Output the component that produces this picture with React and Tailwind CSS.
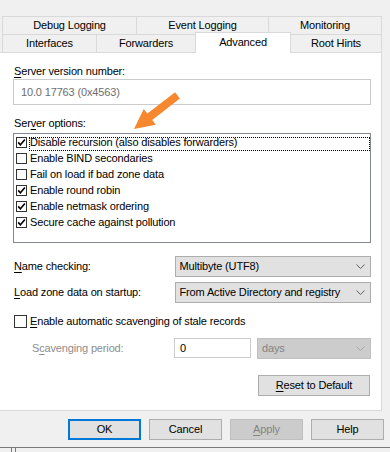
import React from "react";

const Check = ({ checked, size = 11 }) => (
  <span
    className="inline-flex items-center justify-center bg-white border border-[#333333] shrink-0"
    style={{ width: size, height: size }}
  >
    {checked && (
      <svg width={size - 2} height={size - 2} viewBox="0 0 9 9">
        <path d="M1.2 4.4 L3.4 6.8 L7.9 1.6" fill="none" stroke="#000" strokeWidth="1.6" />
      </svg>
    )}
  </span>
);

const Chevron = ({ color = "#606060" }) => (
  <svg width="9" height="5" viewBox="0 0 9 5" className="shrink-0">
    <path d="M0.5 0.5 L4.5 4.5 L8.5 0.5" fill="none" stroke={color} strokeWidth="1" />
  </svg>
);

const Select = ({ text, disabled, w }) => (
  <div
    className={
      "h-[21px] flex items-center justify-between pl-[4px] pr-[5px] border " +
      (disabled ? "bg-[#cccccc] border-[#bfbfbf] text-[#838383]" : "bg-[#e1e1e1] border-[#adadad] text-black")
    }
    style={{ width: w }}
  >
    <span className="leading-[19px]">{text}</span>
    <Chevron color={disabled ? "#a8a8a8" : "#606060"} />
  </div>
);

const items = [
  ["Disable recursion (also disables forwarders)", true],
  ["Enable BIND secondaries", false],
  ["Fail on load if bad zone data", false],
  ["Enable round robin", true],
  ["Enable netmask ordering", true],
  ["Secure cache against pollution", true],
];

export default function App() {
  return (
    <div className="relative w-[390px] h-[452px] overflow-hidden bg-[#f0f0f0] text-black text-[11px] tracking-[-0.15px] font-['Liberation_Sans',Arial,sans-serif]">
      {/* Tabs */}
      <div className="pt-[16px]">
        <div className="flex ml-[2px] h-[18px]">
          <div className="w-[135px] border-l border-t border-r border-[#d9d9d9] flex items-center justify-center leading-[17px]">Debug Logging</div>
          <div className="w-[132px] border-t border-r border-[#d9d9d9] flex items-center justify-center leading-[17px]">Event Logging</div>
          <div className="w-[113px] border-t border-r border-[#d9d9d9] flex items-center justify-center leading-[17px]">Monitoring</div>
        </div>
        <div className="flex ml-[2px] h-[18px]">
          <div className="w-[95px] h-[18px] border-l border-t border-r border-[#d9d9d9] flex items-center justify-center leading-[17px]">Interfaces</div>
          <div className="w-[98px] h-[18px] border-t border-[#d9d9d9] flex items-center justify-center leading-[17px]">Forwarders</div>
          <div className="relative z-10 w-[96px] h-[21px] -mt-[2px] bg-white border-l border-t border-r border-[#d9d9d9] flex items-center justify-center leading-[17px] pb-[2px]">Advanced</div>
          <div className="w-[91px] h-[18px] border-t border-r border-[#d9d9d9] flex items-center justify-center leading-[17px]">Root Hints</div>
        </div>
      </div>

      {/* Panel */}
      <div className="w-[382px] h-[359px] bg-white border-t border-r border-b border-[#d9d9d9] pl-[13px] pt-[12px]">
        <div className="w-[358px]">
          <div className="ml-[1px] h-[13px] leading-[13px]">
            <u className="underline-offset-[2px]">S</u>erver version number:
          </div>
          <div className="mt-[1px] h-[26px] border border-[#cccccc] pl-[7px] flex items-center text-[#6d6d6d]">
            10.0 17763 (0x4563)
          </div>

          <div className="mt-[12px] ml-[1px] h-[13px] leading-[13px]">
            Ser<u className="underline-offset-[2px]">v</u>er options:
          </div>
          <div className="mt-[3px] h-[110px] border border-[#828790] bg-white">
            {items.map(([label, checked], i) => (
              <div key={i} className="relative h-[16px] flex items-center pl-[2px]">
                <Check checked={checked} />
                <span className="ml-[3px] leading-[16px] whitespace-nowrap">{label}</span>
                {i === 0 && (
                  <span className="absolute left-[15px] right-0 top-[3px] h-[14px] border border-dotted border-black" />
                )}
              </div>
            ))}
          </div>

          <div className="mt-[13px] flex items-center h-[21px]">
            <div className="w-[161px] ml-[1px]">
              <u className="underline-offset-[2px]">N</u>ame checking:
            </div>
            <Select text="Multibyte (UTF8)" w={197} />
          </div>
          <div className="mt-[5px] flex items-center h-[21px]">
            <div className="w-[161px] ml-[1px]">
              <u className="underline-offset-[2px]">L</u>oad zone data on startup:
            </div>
            <Select text="From Active Directory and registry" w={197} />
          </div>

          <div className="mt-[12px] flex items-center h-[13px] ml-[1px]">
            <Check checked={false} size={13} />
            <span className="ml-[3px] leading-[13px]">
              <u className="underline-offset-[2px]">E</u>nable automatic scavenging of stale records
            </span>
          </div>

          <div className="mt-[10px] flex items-center h-[20px]">
            <div className="w-[161px] pl-[19px] text-[#8d8d8d]">
              S<u className="underline-offset-[2px]">c</u>avenging period:
            </div>
            <div className="w-[77px] h-[20px] border border-[#cccccc] bg-white flex items-center pl-[5px]">0</div>
            <div className="ml-[6px]">
              <Select text="days" disabled w={114} />
            </div>
          </div>

          <div className="mt-[17px] flex justify-end pr-[1px]">
            <div className="w-[112px] h-[21px] bg-[#e1e1e1] border border-[#adadad] flex items-center justify-center leading-[19px]">
              <span><u className="underline-offset-[2px]">R</u>eset to Default</span>
            </div>
          </div>
        </div>
      </div>

      {/* Bottom buttons */}
      <div className="mt-[8px] pl-[68px] flex gap-[8px]">
        <div className="w-[73px] h-[21px] bg-[#e1e1e1] border-2 border-[#0078d7] flex items-center justify-center">OK</div>
        <div className="w-[73px] h-[21px] bg-[#e1e1e1] border border-[#adadad] flex items-center justify-center">Cancel</div>
        <div className="w-[73px] h-[21px] bg-[#cccccc] border border-[#bfbfbf] text-[#838383] flex items-center justify-center">
          <span><u className="underline-offset-[2px]">A</u>pply</span>
        </div>
        <div className="w-[73px] h-[21px] bg-[#e1e1e1] border border-[#adadad] flex items-center justify-center">Help</div>
      </div>

      <div className="mt-[7px] h-px bg-[#7a7a7a]" />
      <div className="flex h-[4px] pl-[11px]">
        <div className="w-px h-full bg-[#7a7a7a]" />
        <div className="w-px h-full bg-[#7a7a7a] ml-[3px]" />
      </div>

      {/* Orange annotation arrow */}
      <svg className="absolute left-0 top-0 pointer-events-none" width="390" height="452" viewBox="0 0 390 452">
        <polygon
          points="134,129 143.7,108.9 147.4,113.6 175.1,92.2 179.9,98.6 152.2,120 155.9,124.7"
          fill="#f7882f"
        />
      </svg>
    </div>
  );
}
